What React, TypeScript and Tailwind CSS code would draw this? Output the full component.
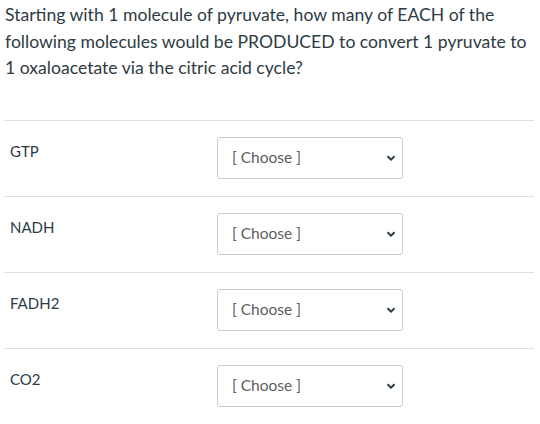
const items = ['GTP', 'NADH', 'FADH2', 'CO2'];

function Chevron() {
  return (
    <svg width="10" height="8" viewBox="0 0 10 8" className="text-[#2d3b45]">
      <path d="M1.5 2.2 L5 5.6 L8.5 2.2" fill="none" stroke="currentColor" strokeWidth="2" />
    </svg>
  );
}

export default function App() {
  return (
    <div className="h-[424px] w-[540px] overflow-hidden bg-white font-['Lato',sans-serif] text-[#2d3b45]">
      <p className="pl-[5px] pr-2 pt-[2px] text-[17.6px] leading-[26.5px]">
        Starting with 1 molecule of pyruvate, how many of EACH of the following molecules would be PRODUCED to convert 1 pyruvate to 1 oxaloacetate via the citric acid cycle?
      </p>
      <div className="mt-[38px] ml-[4px] mr-[6px]">
        {items.map((name) => (
          <div key={name} className="flex h-[76px] items-center border-t border-[#dcdfe2]">
            <div className="w-[213px] self-start pl-[6px] pt-[20px] text-[15px] leading-[20px]">{name}</div>
            <div className="flex h-[42px] w-[186px] items-center justify-between rounded-[3px] border border-[#c7cdd1] pl-[14px] pr-[6px] text-[15.5px] text-[#5a6066]">
              <span className="whitespace-pre">[ Choose ]</span>
              <Chevron />
            </div>
          </div>
        ))}
      </div>
    </div>
  );
}
